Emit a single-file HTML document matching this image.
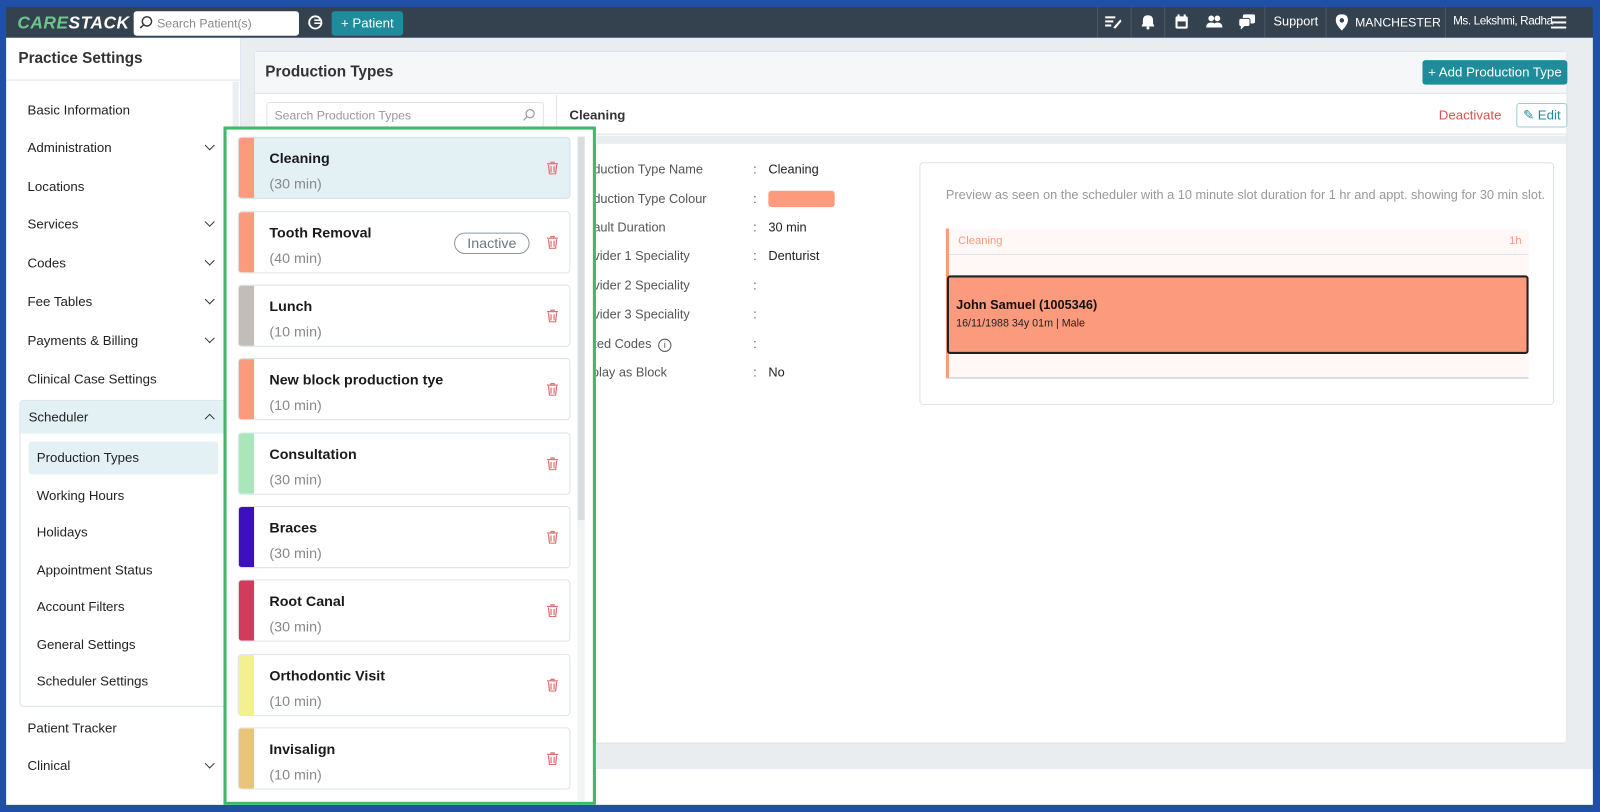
<!DOCTYPE html>
<html><head><meta charset="utf-8"><style>
*{box-sizing:border-box;margin:0;padding:0}
html,body{width:1600px;height:812px;overflow:hidden}
body{background:#1f50a5;font-family:"Liberation Sans",sans-serif;color:#222}
#w{position:absolute;left:0;top:0;width:1568px;height:796px;transform:scale(1.02041,1.0201);transform-origin:0 0}
.a{position:absolute}
.hdr{left:6px;top:7px;width:1555px;height:30px;background:#34424f}
.sb{left:6px;top:37px;width:230px;height:752px;background:#fff}
.main{left:236px;top:37px;width:1325px;height:716px;background:#e9edf0}
.bot{left:236px;top:753px;width:1325px;height:36px;background:#fff}
.nav{font-size:13px;color:#222}
.chev{width:7px;height:7px;border-right:1.5px solid #333;border-bottom:1.5px solid #333;transform:rotate(45deg)}
.card{left:233px;width:326px;height:61px;background:#fff;border:1px solid #dde3e8;border-radius:4px;overflow:hidden}
.card .bar{position:absolute;left:0;top:0;width:15px;height:100%}
.card .t{position:absolute;left:30px;top:12px;font-size:14px;font-weight:bold;color:#1a1a1a}
.card .d{position:absolute;left:30px;top:37px;font-size:14px;color:#888}
.tr{position:absolute;left:302px;top:23px;width:11px;height:13px}
.lbl{font-size:12.5px;color:#555}
.val{font-size:12.5px;color:#222}
.sep{top:7px;width:1px;height:30px;background:#4b5966}
</style></head><body><div id="w">
<div class="a hdr"></div>
<div class="a" style="left:17px;top:13px;font-size:17px;font-weight:bold;font-style:italic;letter-spacing:0.5px;color:#fff"><span style="color:#6cc58a">CARE</span>STACK</div>
<div class="a" style="left:131px;top:11px;width:162px;height:24px;background:#fff;border-radius:3px"></div>
<svg class="a" style="left:136px;top:15px" width="14" height="14"><circle cx="8" cy="6" r="4.5" fill="none" stroke="#333" stroke-width="1.4"/><line x1="5" y1="9" x2="1.5" y2="12.5" stroke="#333" stroke-width="1.5"/></svg>
<div class="a" style="left:154px;top:16px;font-size:12px;color:#888">Search Patient(s)</div>
<svg class="a" style="left:301px;top:14px" width="16" height="16"><circle cx="8" cy="8" r="6" fill="none" stroke="#fff" stroke-width="1.8"/><rect x="7" y="5" width="6" height="1.5" fill="#fff"/><rect x="7" y="8" width="6" height="1.5" fill="#fff"/></svg>
<div class="a" style="left:325px;top:11px;width:70px;height:24px;background:#1f8c9b;border-radius:3px;color:#fff;font-size:13px;line-height:24px;text-align:center">+ Patient</div>
<div class="a sep" style="left:1075px"></div><div class="a sep" style="left:1108px"></div><div class="a sep" style="left:1141px"></div><div class="a sep" style="left:1239px"></div><div class="a sep" style="left:1299px"></div><div class="a sep" style="left:1416px"></div>
<svg class="a" style="left:1083px;top:15px" width="16" height="14"><rect x="0" y="1" width="10" height="2" fill="#fff"/><rect x="0" y="5" width="8" height="2" fill="#fff"/><rect x="0" y="9" width="6" height="2" fill="#fff"/><path d="M8 12 L15 4 L16 6 L10 13 Z" fill="#fff"/></svg>
<svg class="a" style="left:1118px;top:13px" width="14" height="16"><path d="M2 12 L2 7 Q2 2 7 2 Q12 2 12 7 L12 12 Z" fill="#fff"/><rect x="1" y="11" width="12" height="2" fill="#fff"/><circle cx="7" cy="14.5" r="1.5" fill="#fff"/></svg>
<svg class="a" style="left:1151px;top:14px" width="14" height="15"><rect x="1" y="2" width="12" height="12" rx="1.5" fill="#fff"/><rect x="3" y="0" width="2" height="4" fill="#fff"/><rect x="9" y="0" width="2" height="4" fill="#fff"/><rect x="3" y="7" width="8" height="5" fill="#34424f"/></svg>
<svg class="a" style="left:1182px;top:14px" width="16" height="14"><circle cx="5" cy="4" r="2.8" fill="#fff"/><circle cx="11" cy="4" r="2.8" fill="#fff"/><path d="M0 13 Q0 8 5 8 Q10 8 10 13Z M7 13 Q7 8 11 8 Q16 8 16 13Z" fill="#fff"/></svg>
<svg class="a" style="left:1214px;top:14px" width="16" height="15"><rect x="4" y="0" width="12" height="9" rx="2" fill="#fff"/><rect x="0" y="4" width="11" height="8" rx="2" fill="#fff" stroke="#34424f"/><path d="M2 11 L2 15 L6 11Z" fill="#fff"/></svg>
<div class="a" style="left:1248px;top:14px;font-size:12.5px;color:#fff">Support</div>
<svg class="a" style="left:1309px;top:14px" width="12" height="16"><path d="M6 0 Q12 0 12 6 Q12 10 6 16 Q0 10 0 6 Q0 0 6 0Z" fill="#fff"/><circle cx="6" cy="6" r="2.2" fill="#34424f"/></svg>
<div class="a" style="left:1328px;top:15px;font-size:12px;color:#fff">MANCHESTER</div>
<div class="a" style="left:1424px;top:15px;font-size:11.5px;letter-spacing:-0.4px;color:#fff">Ms. Lekshmi, Radha</div>
<svg class="a" style="left:1520px;top:16px" width="15" height="12"><rect y="0" width="15" height="2" fill="#fff"/><rect y="5" width="15" height="2" fill="#fff"/><rect y="10" width="15" height="2" fill="#fff"/></svg>

<div class="a sb"></div>
<div class="a" style="left:18px;top:49px;font-size:15px;font-weight:bold;color:#333">Practice Settings</div>
<div class="a" style="left:6px;top:78px;width:230px;height:1px;background:#dde3e8"></div>
<div class="a" style="left:228px;top:80px;width:6px;height:680px;background:#eceff1"></div>
<div class="a nav" style="left:27px;top:100px">Basic Information</div>
<div class="a nav" style="left:27px;top:137px">Administration</div><div class="a chev" style="left:202px;top:139px"></div>
<div class="a nav" style="left:27px;top:175px">Locations</div>
<div class="a nav" style="left:27px;top:212px">Services</div><div class="a chev" style="left:202px;top:214px"></div>
<div class="a nav" style="left:27px;top:250px">Codes</div><div class="a chev" style="left:202px;top:252px"></div>
<div class="a nav" style="left:27px;top:288px">Fee Tables</div><div class="a chev" style="left:202px;top:290px"></div>
<div class="a nav" style="left:27px;top:326px">Payments &amp; Billing</div><div class="a chev" style="left:202px;top:328px"></div>
<div class="a nav" style="left:27px;top:364px">Clinical Case Settings</div>
<div class="a" style="left:19px;top:392px;width:212px;height:301px;border:1px solid #dde3e8;border-radius:4px;background:#fff"></div>
<div class="a" style="left:20px;top:393px;width:210px;height:32px;background:#e3f1f5"></div>
<div class="a nav" style="left:28px;top:401px">Scheduler</div>
<div class="a" style="left:202px;top:407px;width:7px;height:7px;border-left:1.5px solid #333;border-top:1.5px solid #333;transform:rotate(45deg)"></div>
<div class="a" style="left:28px;top:433px;width:186px;height:32px;background:#e3f1f5;border-radius:3px"></div>
<div class="a nav" style="left:36px;top:441px">Production Types</div>
<div class="a nav" style="left:36px;top:478px">Working Hours</div>
<div class="a nav" style="left:36px;top:514px">Holidays</div>
<div class="a nav" style="left:36px;top:551px">Appointment Status</div>
<div class="a nav" style="left:36px;top:587px">Account Filters</div>
<div class="a nav" style="left:36px;top:624px">General Settings</div>
<div class="a nav" style="left:36px;top:660px">Scheduler Settings</div>
<div class="a nav" style="left:27px;top:706px">Patient Tracker</div>
<div class="a nav" style="left:27px;top:743px">Clinical</div><div class="a chev" style="left:202px;top:745px"></div>

<div class="a main"></div>
<div class="a bot"></div>
<div class="a" style="left:249px;top:50px;width:1287px;height:679px;background:#fff;border:1px solid #dde3e8;border-radius:4px"></div>
<div class="a" style="left:250px;top:51px;width:1285px;height:41px;background:#f5f7f8;border-bottom:1px solid #dde3e8"></div>
<div class="a" style="left:260px;top:62px;font-size:15px;font-weight:bold;color:#333">Production Types</div>
<div class="a" style="left:1394px;top:59px;width:142px;height:24px;background:#1f8c9b;border-radius:3px;color:#fff;font-size:13px;line-height:24px;text-align:center">+ Add Production Type</div>
<div class="a" style="left:545px;top:93px;width:1px;height:635px;background:#dde3e8"></div>
<div class="a" style="left:261px;top:100px;width:272px;height:25px;border:1px solid #dde3e8;border-radius:3px;background:#fff"></div>
<div class="a" style="left:269px;top:106px;font-size:12px;color:#999">Search Production Types</div>
<svg class="a" style="left:512px;top:106px" width="13" height="13"><circle cx="7.5" cy="5.5" r="4" fill="none" stroke="#999" stroke-width="1.2"/><line x1="4.5" y1="8.5" x2="1" y2="12" stroke="#999" stroke-width="1.2"/></svg>
<div class="a" style="left:546px;top:93px;width:989px;height:39px;background:#fff;border-bottom:1px solid #dde3e8"></div>
<div class="a" style="left:558px;top:105px;font-size:13px;font-weight:bold;color:#333">Cleaning</div>
<div class="a" style="left:1410px;top:105px;font-size:13px;color:#d9534f">Deactivate</div>
<div class="a" style="left:1486px;top:101px;width:50px;height:24px;border:1px solid #9ccdd5;border-radius:3px;color:#1f8c9b;font-size:13px;line-height:22px;text-align:center">✎ Edit</div>
<div class="a" style="left:546px;top:133px;width:989px;height:8px;background:#e9edf0"></div>

<div class="a lbl" style="left:562px;top:159px">Production Type Name</div>
<div class="a lbl" style="left:562px;top:188px">Production Type Colour</div>
<div class="a lbl" style="left:562px;top:216px">Default Duration</div>
<div class="a lbl" style="left:562px;top:244px">Provider 1 Speciality</div>
<div class="a lbl" style="left:562px;top:273px">Provider 2 Speciality</div>
<div class="a lbl" style="left:562px;top:301px">Provider 3 Speciality</div>
<div class="a lbl" style="left:562px;top:330px">Linked Codes <span style="display:inline-block;width:13px;height:13px;border:1px solid #555;border-radius:50%;font-size:9px;text-align:center;line-height:11px;margin-left:3px">i</span></div>
<div class="a lbl" style="left:562px;top:358px">Display as Block</div>
<div class="a lbl" style="left:738px;top:159px">:</div><div class="a lbl" style="left:738px;top:188px">:</div><div class="a lbl" style="left:738px;top:216px">:</div><div class="a lbl" style="left:738px;top:244px">:</div><div class="a lbl" style="left:738px;top:273px">:</div><div class="a lbl" style="left:738px;top:301px">:</div><div class="a lbl" style="left:738px;top:330px">:</div><div class="a lbl" style="left:738px;top:358px">:</div>
<div class="a val" style="left:753px;top:159px">Cleaning</div>
<div class="a" style="left:753px;top:187px;width:65px;height:16px;background:#fb9a7c;border-radius:3px"></div>
<div class="a val" style="left:753px;top:216px">30 min</div>
<div class="a val" style="left:753px;top:244px">Denturist</div>
<div class="a val" style="left:753px;top:358px">No</div>

<div class="a" style="left:901px;top:159px;width:622px;height:238px;border:1px solid #dde3e8;border-radius:4px;background:#fff"></div>
<div class="a" style="left:927px;top:184px;font-size:12.5px;color:#999">Preview as seen on the scheduler with a 10 minute slot duration for 1 hr and appt. showing for 30 min slot.</div>
<div class="a" style="left:927px;top:224px;width:571px;height:147px;background:#fff8f7;border-left:3px solid #fb9a7c;border-bottom:1px solid #b8c2cc"></div>
<div class="a" style="left:930px;top:249px;width:568px;height:1px;background:#dde3e8"></div>
<div class="a" style="left:939px;top:230px;font-size:11px;color:#fb9a7c">Cleaning</div>
<div class="a" style="left:1479px;top:230px;font-size:11px;color:#fb9a7c">1h</div>
<div class="a" style="left:928px;top:270px;width:570px;height:77px;background:#fb9a7c;border:2px solid #222;border-radius:3px"></div>
<div class="a" style="left:937px;top:292px;font-size:12.5px;font-weight:bold;color:#111">John Samuel (1005346)</div>
<div class="a" style="left:937px;top:311px;font-size:10.5px;color:#222">16/11/1988 34y 01m | Male</div>

<div class="a" style="left:219px;top:124px;width:365px;height:665px;background:#fff;border:3px solid #3cb96a"></div>
<div class="a" style="left:566px;top:134px;width:7px;height:376px;background:#d8dde1"></div>
<div class="a" style="left:566px;top:510px;width:7px;height:276px;background:#f0f2f4"></div>

<div class="a card" style="top:134px;background:#e3f1f5;border-color:#cfe3ea"><div class="bar" style="background:#fb9a7c"></div><div class="t">Cleaning</div><div class="d">(30 min)</div><svg class="tr" viewBox="0 0 11 13"><path d="M0 2.5h11M4 2.5V1h3v1.5M1.5 3.5l1 9h6l1-9M4 5v6M7 5v6" fill="none" stroke="#e07070" stroke-width="1.2"/></svg></div>
<div class="a card" style="top:207px"><div class="bar" style="background:#fb9a7c"></div><div class="t">Tooth Removal</div><div class="d">(40 min)</div><div style="position:absolute;left:211px;top:20px;width:74px;height:21px;border:1px solid #8a97a3;border-radius:11px;color:#6a7783;font-size:14px;text-align:center;line-height:19px">Inactive</div><svg class="tr" viewBox="0 0 11 13"><path d="M0 2.5h11M4 2.5V1h3v1.5M1.5 3.5l1 9h6l1-9M4 5v6M7 5v6" fill="none" stroke="#e07070" stroke-width="1.2"/></svg></div>
<div class="a card" style="top:279px"><div class="bar" style="background:#c2bdb9"></div><div class="t">Lunch</div><div class="d">(10 min)</div><svg class="tr" viewBox="0 0 11 13"><path d="M0 2.5h11M4 2.5V1h3v1.5M1.5 3.5l1 9h6l1-9M4 5v6M7 5v6" fill="none" stroke="#e07070" stroke-width="1.2"/></svg></div>
<div class="a card" style="top:351px"><div class="bar" style="background:#fb9a7c"></div><div class="t">New block production tye</div><div class="d">(10 min)</div><svg class="tr" viewBox="0 0 11 13"><path d="M0 2.5h11M4 2.5V1h3v1.5M1.5 3.5l1 9h6l1-9M4 5v6M7 5v6" fill="none" stroke="#e07070" stroke-width="1.2"/></svg></div>
<div class="a card" style="top:424px"><div class="bar" style="background:#a9e6ba"></div><div class="t">Consultation</div><div class="d">(30 min)</div><svg class="tr" viewBox="0 0 11 13"><path d="M0 2.5h11M4 2.5V1h3v1.5M1.5 3.5l1 9h6l1-9M4 5v6M7 5v6" fill="none" stroke="#e07070" stroke-width="1.2"/></svg></div>
<div class="a card" style="top:496px"><div class="bar" style="background:#3e0fbf"></div><div class="t">Braces</div><div class="d">(30 min)</div><svg class="tr" viewBox="0 0 11 13"><path d="M0 2.5h11M4 2.5V1h3v1.5M1.5 3.5l1 9h6l1-9M4 5v6M7 5v6" fill="none" stroke="#e07070" stroke-width="1.2"/></svg></div>
<div class="a card" style="top:568px"><div class="bar" style="background:#d23b5b"></div><div class="t">Root Canal</div><div class="d">(30 min)</div><svg class="tr" viewBox="0 0 11 13"><path d="M0 2.5h11M4 2.5V1h3v1.5M1.5 3.5l1 9h6l1-9M4 5v6M7 5v6" fill="none" stroke="#e07070" stroke-width="1.2"/></svg></div>
<div class="a card" style="top:641px"><div class="bar" style="background:#f3f18f"></div><div class="t">Orthodontic Visit</div><div class="d">(10 min)</div><svg class="tr" viewBox="0 0 11 13"><path d="M0 2.5h11M4 2.5V1h3v1.5M1.5 3.5l1 9h6l1-9M4 5v6M7 5v6" fill="none" stroke="#e07070" stroke-width="1.2"/></svg></div>
<div class="a card" style="top:713px"><div class="bar" style="background:#e8c57a"></div><div class="t">Invisalign</div><div class="d">(10 min)</div><svg class="tr" viewBox="0 0 11 13"><path d="M0 2.5h11M4 2.5V1h3v1.5M1.5 3.5l1 9h6l1-9M4 5v6M7 5v6" fill="none" stroke="#e07070" stroke-width="1.2"/></svg></div>
</div></body></html>
